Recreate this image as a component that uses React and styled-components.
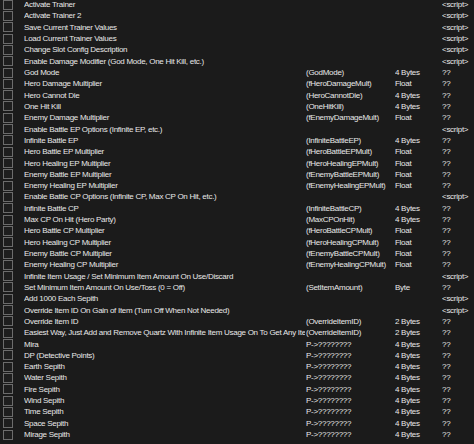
import React from "react";
import styled, { createGlobalStyle } from "styled-components";

const Global = createGlobalStyle`
  html, body {
    margin: 0;
    padding: 0;
    background: #1b1b1b;
    overflow: hidden;
  }
`;

const Table = styled.div`
  width: 474px;
  height: 444px;
  background: #1b1b1b;
  overflow: hidden;
  font-family: "Liberation Sans", Arial, sans-serif;
  font-size: 8px;
  letter-spacing: -0.28px;
  color: #e8e8e8;
`;

const List = styled.div`
  display: flex;
  flex-direction: column;
  margin-top: -1px;
`;

const Row = styled.div`
  display: grid;
  grid-template-columns: 24px 281px 90px 47px 32px;
  align-items: center;
  height: 11.32px;
  white-space: nowrap;
`;

const Box = styled.span`
  display: block;
  width: 8px;
  height: 8px;
  margin-left: 3px;
  border: 1px solid #6c6c6c;
  background: #1e1e1e;
`;

const Cell = styled.span`
  overflow: hidden;
  text-overflow: clip;
  padding-left: ${(p) => p.$pad || 0}px;
`;

const rows = [
  ["Activate Trainer", "", "", "<script>"],
  ["Activate Trainer 2", "", "", "<script>"],
  ["Save Current Trainer Values", "", "", "<script>"],
  ["Load Current Trainer Values", "", "", "<script>"],
  ["Change Slot Config Description", "", "", "<script>"],
  ["Enable Damage Modifier (God Mode, One Hit Kill, etc.)", "", "", "<script>"],
  ["God Mode", "(GodMode)", "4 Bytes", "??"],
  ["Hero Damage Multiplier", "(fHeroDamageMult)", "Float", "??"],
  ["Hero Cannot Die", "(HeroCannotDie)", "4 Bytes", "??"],
  ["One Hit Kill", "(OneHitKill)", "4 Bytes", "??"],
  ["Enemy Damage Multiplier", "(fEnemyDamageMult)", "Float", "??"],
  ["Enable Battle EP Options (Infinite EP, etc.)", "", "", "<script>"],
  ["Infinite Battle EP", "(InfiniteBattleEP)", "4 Bytes", "??"],
  ["Hero Battle EP Multiplier", "(fHeroBattleEPMult)", "Float", "??"],
  ["Hero Healing EP Multiplier", "(fHeroHealingEPMult)", "Float", "??"],
  ["Enemy Battle EP Multiplier", "(fEnemyBattleEPMult)", "Float", "??"],
  ["Enemy Healing EP Multiplier", "(fEnemyHealingEPMult)", "Float", "??"],
  ["Enable Battle CP Options (Infinite CP, Max CP On Hit, etc.)", "", "", "<script>"],
  ["Infinite Battle CP", "(InfiniteBattleCP)", "4 Bytes", "??"],
  ["Max CP On Hit (Hero Party)", "(MaxCPOnHit)", "4 Bytes", "??"],
  ["Hero Battle CP Multiplier", "(fHeroBattleCPMult)", "Float", "??"],
  ["Hero Healing CP Multiplier", "(fHeroHealingCPMult)", "Float", "??"],
  ["Enemy Battle CP Multiplier", "(fEnemyBattleCPMult)", "Float", "??"],
  ["Enemy Healing CP Multiplier", "(fEnemyHealingCPMult)", "Float", "??"],
  ["Infinite Item Usage / Set Minimum Item Amount On Use/Discard", "", "", "<script>"],
  ["Set Minimum Item Amount On Use/Toss (0 = Off)", "(SetItemAmount)", "Byte", "??"],
  ["Add 1000 Each Sepith", "", "", "<script>"],
  ["Override Item ID On Gain of Item (Turn Off When Not Needed)", "", "", "<script>"],
  ["Override Item ID", "(OverrideItemID)", "2 Bytes", "??"],
  ["Easiest Way, Just Add and Remove Quartz With Infinite Item Usage On To Get Any Item", "(OverrideItemID)", "2 Bytes", "??"],
  ["Mira", "P->????????", "4 Bytes", "??"],
  ["DP (Detective Points)", "P->????????", "4 Bytes", "??"],
  ["Earth Sepith", "P->????????", "4 Bytes", "??"],
  ["Water Sepith", "P->????????", "4 Bytes", "??"],
  ["Fire Sepith", "P->????????", "4 Bytes", "??"],
  ["Wind Sepith", "P->????????", "4 Bytes", "??"],
  ["Time Sepith", "P->????????", "4 Bytes", "??"],
  ["Space Sepith", "P->????????", "4 Bytes", "??"],
  ["Mirage Sepith", "P->????????", "4 Bytes", "??"],
];

export default function App() {
  return (
    <Table>
      <Global />
      <List>
        {rows.map(([desc, addr, type, value], i) => (
          <Row key={i}>
            <Box />
            <Cell>{desc}</Cell>
            <Cell $pad={1}>{addr}</Cell>
            <Cell>{type}</Cell>
            <Cell>{value}</Cell>
          </Row>
        ))}
      </List>
    </Table>
  );
}
